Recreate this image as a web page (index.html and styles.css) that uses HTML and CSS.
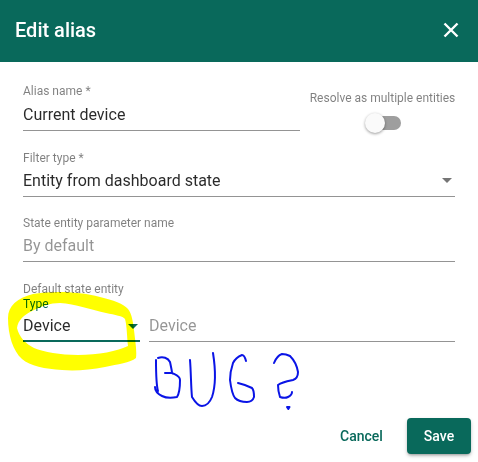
FILE: index.html
```html
<!DOCTYPE html>
<html lang="en">
<head>
<meta charset="utf-8">
<title>Edit alias</title>
<link rel="stylesheet" href="styles.css">
</head>
<body>
<div class="dialog">
  <header class="toolbar">
    <h1 class="title">Edit alias</h1>
    <svg class="close" viewBox="0 0 16 16" width="16" height="16"><path d="M1.5 1.500L14.500 14.500M14.500 1.500L1.500 14.500"/></svg>
  </header>
  <main class="content">
    <div class="row first-row">
      <div class="field grow">
        <label class="label">Alias name *</label>
        <div class="value">Current device</div>
      </div>
      <div class="resolve">
        <span class="resolve-label">Resolve as multiple entities</span>
        <span class="toggle"><span class="track"></span><span class="thumb"></span></span>
      </div>
    </div>
    <div class="field filter-field">
      <label class="label">Filter type *</label>
      <div class="value tight">Entity from dashboard state<span class="arrow"></span></div>
    </div>
    <div class="field state-field">
      <label class="label">State entity parameter name</label>
      <div class="value tight placeholder">By default</div>
    </div>
    <div class="entity">
      <div class="label">Default state entity</div>
      <div class="row entity-row">
        <div class="field type-field">
          <label class="label type-label">Type</label>
          <div class="value tighter focused">Device<span class="arrow teal"></span></div>
        </div>
        <div class="field grow">
          <div class="label">&nbsp;</div>
          <div class="value tighter placeholder">Device</div>
        </div>
      </div>
    </div>
  </main>
  <footer class="actions">
    <button class="btn cancel">Cancel</button>
    <button class="btn save">Save</button>
  </footer>
  <svg class="overlay highlight" viewBox="0 0 478 462" width="478" height="462">
    <path fill-rule="evenodd" d="M8 318C8 306 17 298 33 294C50 291 78 291 100 297C113 300 124 304 128 309C132 314 133 322 134 330C135 340 137 350 136 358C130 363 118 364 105 367C90 370 75 371 62 370C45 369 30 366 22 359C13 351 8 335 8 318ZM17 328C18 320 24 315 32 311C42 306 50 303 60 303C75 304 92 310 106 313C115 315 123 316 125 319C127 326 127 338 128 346C118 351 98 355 78 355C60 355 44 352 34 348C26 344 19 337 17 328Z"/>
  </svg>
  <svg class="overlay scribble" viewBox="0 0 478 462" width="478" height="462">
    <path d="M156 360C156 372 156 384 158 391M158 358C163 356 168 358 170 362C171 367 172 371 172 373L165 373M172 373C176 375 180 376 180 380C180 388 179 394 177 397C172 398 166 398 162 396C158 394 155 391 155 387"/>
    <path d="M190 360C191 372 191 388 192 397C195 402 198 406 202 406C207 406 210 402 212 397C215 388 216 372 213 353"/>
    <path d="M246 361C245 357 244 355 242 355C237 357 235 359 233 363C231 369 230 374 230 380C231 388 232 394 235 398C238 401 243 402 247 402C250 402 253 400 254 397C254 393 254 390 252 388C248 386 243 384 238 383"/>
    <path d="M274 363C276 358 279 355 282 354C285 354 288 355 290 356C294 360 297 366 298 372C298 376 296 379 293 380C288 381 282 382 278 385C278 390 279 394 280 397C283 398 286 398 288 397C290 396 292 394 292 392"/>
    <path class="dot" d="M287 407L289.500 407L288.300 409Z"/>
  </svg>
</div>
</body>
</html>
```
FILE: styles.css
```css
* { box-sizing: border-box; }
html, body { margin: 0; padding: 0; background: #fff; }
body { font-family: Roboto, "Liberation Sans", sans-serif; width: 478px; height: 462px; overflow: hidden; }
.dialog { position: relative; width: 478px; height: 462px; display: flex; flex-direction: column; }
.toolbar { height: 62px; background: #09695b; color: #fff; display: flex; align-items: center; justify-content: space-between; padding: 0 19px 2px 15px; }
.title { margin: 0; font-size: 20px; font-weight: 500; line-height: 28px; }
.close { fill: none; stroke: #fff; stroke-width: 2.4; }
.content { padding: 22px 23px 0; flex: 1; }
.row { display: flex; }
.grow { flex: 1; }
.first-row { gap: 10px; }
.field { display: flex; flex-direction: column; }
.label { display: block; font-size: 12px; line-height: 14px; color: rgba(0,0,0,.5); height: 14px; }
.value { position: relative; height: 33px; padding-top: 7px; font-size: 16px; line-height: 19px; color: rgba(0,0,0,.84); border-bottom: 1px solid #949494; }
.tight { height: 32px; padding-top: 6px; }
.tighter { height: 31px; padding-top: 5px; }
.placeholder { color: rgba(0,0,0,.42); }
.filter-field { margin-top: 18px; }
.state-field { margin-top: 19px; }
.resolve { width: 145px; display: flex; flex-direction: column; align-items: center; padding-top: 7px; }
.resolve-label { font-size: 12px; line-height: 14px; color: rgba(0,0,0,.5); white-space: nowrap; }
.toggle { position: relative; display: block; width: 36px; height: 20px; margin-top: 8px; }
.track { position: absolute; left: 2px; top: 3px; width: 34px; height: 14px; border-radius: 7px; background: #9e9e9e; }
.thumb { position: absolute; left: 0; top: 0; width: 20px; height: 20px; border-radius: 50%; background: #fafafa; box-shadow: 0 1px 3px rgba(0,0,0,.4); }
.arrow { position: absolute; right: 3px; top: 13px; width: 0; height: 0; border-left: 5px solid transparent; border-right: 5px solid transparent; border-top: 5px solid rgba(0,0,0,.54); }
.arrow.teal { border-top-color: #09695b; right: 2px; }
.entity { margin-top: 20px; }
.entity-row { gap: 9px; margin-top: 1px; }
.type-field { width: 117px; }
.type-label { color: #09695b; }
.focused { border-bottom: 2px solid #09695b; }
.actions { display: flex; justify-content: flex-end; align-items: center; gap: 8px; padding: 0 7px 8px 0; }
.btn { font-family: inherit; font-size: 14px; font-weight: 500; height: 36px; border: 0; border-radius: 4px; background: none; padding: 0; cursor: pointer; }
.cancel { color: #09695b; width: 75px; }
.save { color: #fff; background: #09695b; width: 64px; box-shadow: 0 2px 3px -1px rgba(0,0,0,.3), 0 2px 4px rgba(0,0,0,.16); }
.overlay { position: absolute; left: 0; top: 0; pointer-events: none; }
.highlight { mix-blend-mode: multiply; fill: #ffff00; }
.scribble { fill: none; stroke: #0a14e6; stroke-width: 2; stroke-linecap: round; stroke-linejoin: round; }
.dot { fill: #0a14e6; }
```
